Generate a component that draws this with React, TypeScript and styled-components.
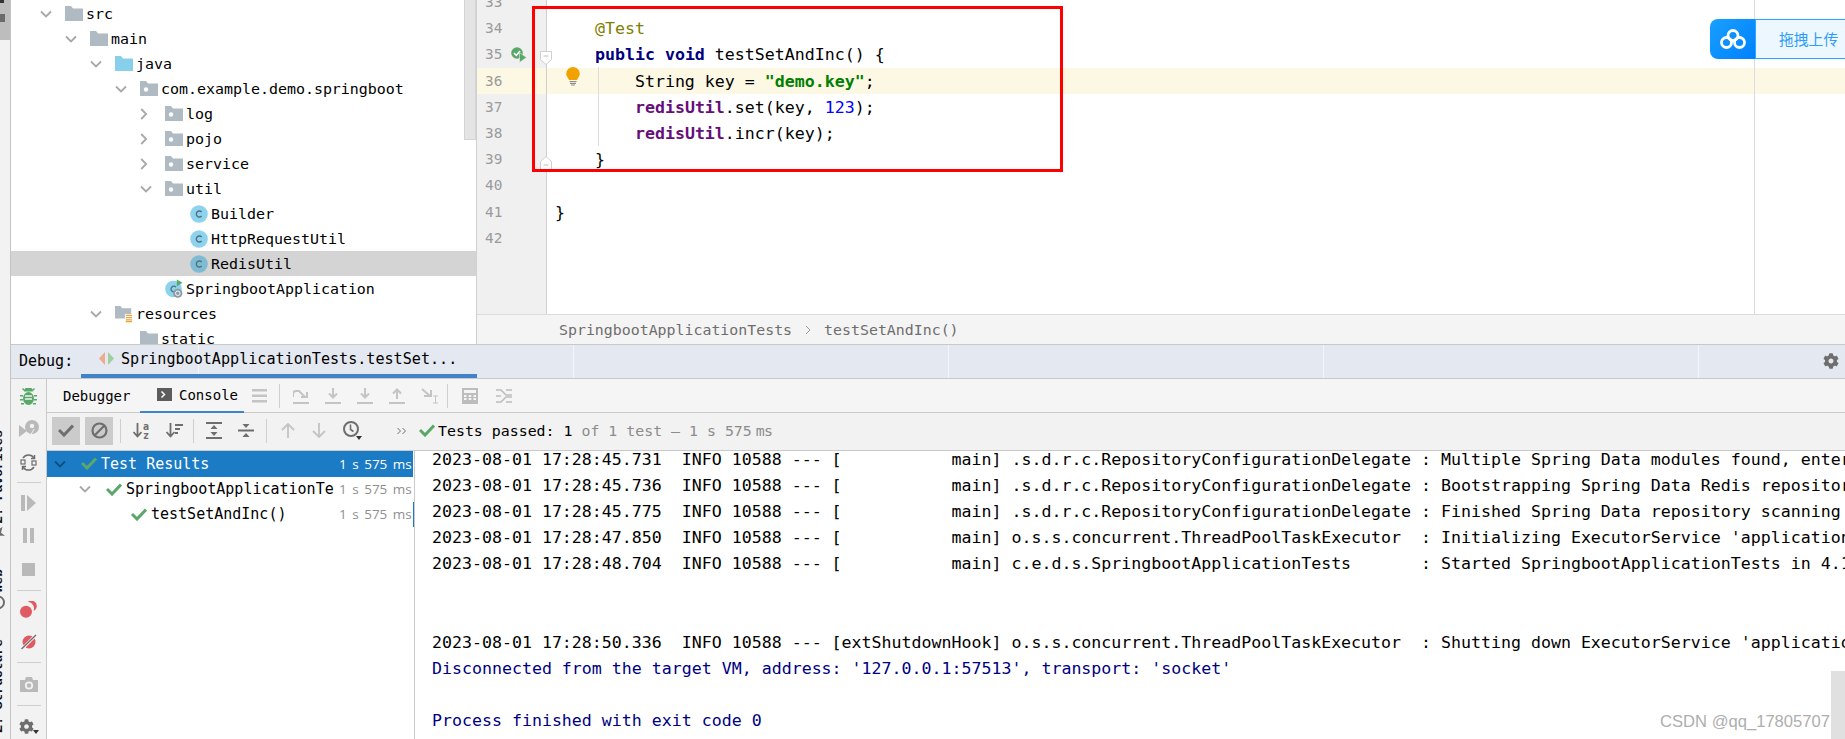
import React from "react";
import styled, { createGlobalStyle } from "styled-components";
import { FaCog } from "react-icons/fa";

const Global = createGlobalStyle`
  html, body { margin: 0; padding: 0; background: #fff; }
  body { font-family: "DejaVu Sans Mono", "Liberation Mono", monospace; }
`;

const MONO = `"DejaVu Sans Mono", "Liberation Mono", monospace`;

const Page = styled.div`
  position: relative; width: 1845px; height: 739px; overflow: hidden; display: flex; background: #fff; color: #000;
  font-family: ${MONO};
`;
const SideStrip = styled.div`
  width: 10px; flex: none; background: #f2f2f2; border-right: 1px solid #c4c4c4; display: flex; flex-direction: column; overflow: hidden;
`;
const SideActive = styled.div`
  height: 40px; flex: none; background: #bdbdbd; display: flex; flex-direction: column; align-items: flex-start; gap: 11px;
`;
const SideMarkTop = styled.div` width: 4px; height: 3px; background: #333; `;
const SideMark = styled.div` width: 5px; height: 8px; background: #6b6b6b; `;
const SideLabel = styled.div<{ $top: number }>`
  margin-top: ${p => p.$top}px; margin-left: -9px; width: 15px; flex: none; display: flex; align-items: center; gap: 3px;
  writing-mode: vertical-rl; transform: rotate(180deg); font-size: 13px; line-height: 15px; white-space: nowrap; font-weight: 700; color: #111;
  font-family: "Liberation Mono", monospace;
`;
const Main = styled.div` flex: 1; min-width: 0; display: flex; flex-direction: column; `;
const Top = styled.div` height: 344px; flex: none; display: flex; border-bottom: 1px solid #c9c9c9; box-sizing: content-box; `;

/* project tree */
const Tree = styled.div`
  position: relative; width: 465px; flex: none; overflow: hidden; border-right: 1px solid #d0d0d0; font-size: 14.95px;
  padding-top: 1px; box-sizing: content-box;
`;
const TreeRow = styled.div<{ $level: number; $selected?: boolean }>`
  height: 25px; display: flex; align-items: center; padding-left: ${p => 29 + p.$level * 25}px; white-space: nowrap;
  background: ${p => (p.$selected ? "#d4d4d4" : "transparent")};
`;
const Chevron = styled.span`
  width: 25px; flex: none; display: flex; align-items: center; height: 100%;
`;
const RowIcon = styled.span` width: 18px; height: 18px; flex: none; margin-right: 3px; display: flex; align-items: center; `;
const TreeScroll = styled.div`
  position: absolute; left: 453px; top: 0; width: 10px; height: 139px; background: #e4e4e4; border: 1px solid #d4d4d4; border-top: none;
`;

/* editor */
const Editor = styled.div` position: relative; flex: 1; min-width: 0; display: flex; flex-direction: column; `;
const EditorBody = styled.div` flex: 1; min-height: 0; overflow: hidden; position: relative; `;
const Lines = styled.div` margin-top: -11px; display: flex; flex-direction: column; height: 345px; `;
const Line = styled.div<{ $hl?: boolean; $fill?: boolean }>`
  display: flex; height: 26.2px; flex: ${p => (p.$fill ? "1" : "none")}; background: ${p => (p.$hl ? "#fdf8e4" : "transparent")};
`;
const GutterCell = styled.div<{ $hl?: boolean }>`
  position: relative; width: 61px; padding-left: 8px; flex: none; line-height: 27px; font-size: 14.4px; color: #9a9a9a; font-family: ${MONO};
  background: ${p => (p.$hl ? "#fdf8e4" : "#f0f0f0")}; border-right: 1px solid #cfcfcf;
`;
const Code = styled.div`
  padding-left: 8px; font-size: 16.6px; line-height: 27px; white-space: pre; color: #000;
`;
const Kw = styled.span` color: #000080; font-weight: 700; `;
const Ann = styled.span` color: #808000; `;
const Str = styled.span` color: #008000; font-weight: 700; `;
const Field = styled.span` color: #660e7a; font-weight: 700; `;
const Num = styled.span` color: #0000ff; `;
const RunMark = styled.span` position: absolute; left: 34px; top: 4px; `;
const FoldMark = styled.span` position: absolute; left: 63px; top: 6px; `;
const Bulb = styled.span` position: absolute; left: 89px; top: 67px; `;
const IndentGuide = styled.div` position: absolute; left: 121px; top: 67px; width: 1px; height: 79px; background: #dcdcdc; `;
const PrintMargin = styled.div` position: absolute; left: 1277px; top: 0; width: 1px; height: 100%; background: #dcdcdc; `;
const Crumbs = styled.div`
  height: 29px; flex: none; display: flex; align-items: center; padding-left: 82px; gap: 13px; font-size: 14.9px; color: #6e6e6e;
  background: #f4f4f4; border-top: 1px solid #dcdcdc;
`;

/* debug header */
const DebugHeader = styled.div`
  position: relative; height: 33px; flex: none; display: flex; border-bottom: 1px solid #c9c9c9; font-size: 15px;
  background: linear-gradient(90deg, #f4f6fa 1px, transparent 1px) 187px 0 / 375px 100% repeat-x, #e4e8f0;
`;
const DebugTitle = styled.div` width: 62px; padding-left: 8px; flex: none; line-height: 33px; `;
const DebugTab = styled.div`
  width: 396px; height: 33px; flex: none; box-sizing: border-box; display: flex; align-items: center; gap: 7px; padding: 0 0 2px 18px; border-bottom: 4px solid #4083c9; white-space: nowrap; font-size: 15.1px;
`;
const HeaderCog = styled.span` position: absolute; right: 6px; top: 8px; color: #6e6e6e; display: flex; `;

/* debug body */
const DebugBody = styled.div` flex: 1; min-height: 0; display: flex; `;
const VBar = styled.div`
  width: 35px; flex: none; background: #f2f2f2; border-right: 1px solid #c9c9c9; display: flex; flex-direction: column; align-items: center; padding-top: 8px; box-sizing: content-box;
`;
const VButton = styled.div<{ $h: number }>` height: ${p => p.$h}px; flex: none; display: flex; align-items: center; justify-content: center; `;
const VSep = styled.div<{ $mt?: number }>` width: 24px; height: 1px; flex: none; background: #cfcfcf; margin-top: ${p => p.$mt ?? 0}px; `;
const DebugMain = styled.div` flex: 1; min-width: 0; display: flex; flex-direction: column; `;
const TabsRow = styled.div`
  height: 34px; flex: none; display: flex; align-items: center; background: #f5f5f5; border-bottom: 1px solid #c9c9c9; box-sizing: border-box; font-size: 14px;
`;
const PlainTab = styled.div` padding-left: 16px; width: 93px; flex: none; box-sizing: border-box; `;
const ConsoleTab = styled.div`
  width: 104px; height: 34px; flex: none; box-sizing: border-box; display: flex; align-items: center; gap: 7px; padding-left: 17px; border-bottom: 2px solid #4083c9; 
`;
const IconGroup = styled.div<{ $pl: number; $gap: number }>` display: flex; align-items: center; padding-left: ${p => p.$pl}px; gap: ${p => p.$gap}px; flex: none; `;
const ToolSep = styled.div<{ $ml: number }>` width: 1px; height: 24px; flex: none; background: #cfcfcf; margin-left: ${p => p.$ml}px; `;
const ActionsRow = styled.div`
  height: 38px; flex: none; display: flex; align-items: center; background: #f2f2f2; border-bottom: 1px solid #c9c9c9; box-sizing: border-box; padding: 0 0 2px 5px; font-size: 14.9px; white-space: nowrap;
`;
const Toggle = styled.div<{ $ml?: number }>`
  width: 28px; height: 28px; flex: none; background: #cbcbcb; display: flex; align-items: center; justify-content: center; margin-left: ${p => p.$ml ?? 0}px;
`;
const Passed = styled.span` margin-left: 3px; `;
const Muted = styled.span` color: #8c8c8c; `;
const Ms = styled.span` margin-left: 4px; letter-spacing: -0.7px; `;
const Results = styled.div` flex: 1; min-height: 0; display: flex; `;
const TestTree = styled.div` position: relative; width: 367px; flex: none; font-size: 15px; border-right: 1px solid #c9c9c9; box-sizing: content-box; `;
const TestRow = styled.div<{ $sel?: boolean; $level: number }>`
  height: 25px; display: flex; align-items: center; white-space: nowrap; padding-left: ${p => 7 + p.$level * 25}px; padding-right: 6px; margin-right: 1px; padding-bottom: 1px; box-sizing: border-box;
  background: ${p => (p.$sel ? "#1b7bc4" : "transparent")}; color: ${p => (p.$sel ? "#fff" : "#000")};
  &:first-child { height: 26px; }
`;
const TestChevron = styled.span` width: 27px; flex: none; display: flex; `;
const TestCheck = styled.span` width: 19px; flex: none; display: flex; margin-right: 1px; `;
const TestName = styled.span` flex: 1; min-width: 0; overflow: hidden; `;
const Time = styled.span<{ $sel?: boolean }>` flex: none; width: 68px; margin-left: 4px; text-align: right; color: ${p => (p.$sel ? "#fff" : "#8f8f8f")}; font-family: "Open Sans", sans-serif; font-size: 13.5px; word-spacing: 2px; `;
const Mark = styled.div` position: absolute; right: 0; top: 51px; width: 1px; height: 25px; background: #1b7bc4; `;
const Console = styled.div`
  position: relative; flex: 1; min-width: 0; overflow: hidden; padding-left: 17px; margin-top: -4.5px; font-size: 16.6px; line-height: 26.2px; white-space: pre;
`;
const ConsoleLine = styled.div<{ $sys?: boolean }>` height: 26.2px; color: ${p => (p.$sys ? "#000080" : "#000")}; `;
const ConsoleScroll = styled.div` position: absolute; right: 0; top: 224px; width: 14px; height: 100px; background: #e0e0e0; `;

/* overlays */
const RedBox = styled.div` position: absolute; left: 532px; top: 6px; width: 531px; height: 166px; box-sizing: border-box; border: 3px solid #f00; pointer-events: none; `;
const Baidu = styled.div` position: absolute; left: 1710px; top: 19px; width: 135px; height: 40px; display: flex; `;
const BaiduIcon = styled.div` width: 45px; flex: none; background: linear-gradient(135deg, #18a0ff, #0080ff); border-radius: 8px 0 0 8px; display: flex; align-items: center; justify-content: center; `;
const BaiduText = styled.div`
  flex: 1; background: #ecf7ff; border: 1px solid #2aa7ff; border-right: none; color: #2d9dfb; font-size: 14.8px; padding-left: 23px; line-height: 38px; white-space: nowrap; overflow: hidden;
  font-family: "Noto Sans CJK SC", sans-serif;
`;
const Watermark = styled.div` position: absolute; left: 1660px; top: 712px; font-family: "Liberation Sans", sans-serif; font-size: 16.6px; line-height: 20px; color: #aeaeae; white-space: nowrap; `;

/* icons */
const G = "#b9b9b9";
const D = "#6e6e6e";
const Down = ({ c = "#a8a8a8" }: { c?: string }) => (
  <svg width="12" height="8" viewBox="0 0 12 8"><path d="M1 1.5l5 5 5-5" fill="none" stroke={c} strokeWidth="1.8" /></svg>
);
const Right = () => (
  <svg width="8" height="12" viewBox="0 0 8 12"><path d="M1.2 1l5 5-5 5" fill="none" stroke="#a8a8a8" strokeWidth="1.8" /></svg>
);
const Folder = ({ c = "#afbac3", dot }: { c?: string; dot?: boolean }) => (
  <svg width="18" height="15" viewBox="0 0 18 15">
    <path d="M0 0h6l2 2.5h10V15H0z" fill={c} />
    {dot && <circle cx="6" cy="8.5" r="2.2" fill="#fff" />}
  </svg>
);
const ResFolder = () => (
  <svg width="20" height="18" viewBox="0 0 20 18">
    <path d="M0 0h6l2 2.5h10V14H0z" fill="#afbac3" />
    <rect x="11" y="9" width="9" height="9" fill="#fff" />
    <path d="M12 10.5h7M12 13h7M12 15.5h7M12 17.5h7" stroke="#e8a33d" strokeWidth="1.3" />
  </svg>
);
const ClassIcon = ({ dark }: { dark?: boolean }) => (
  <svg width="18" height="18" viewBox="0 0 18 18">
    <circle cx="9" cy="9" r="8.8" fill={dark ? "#7fbcd4" : "#8dd3ee"} />
    <path d="M11.6 7a3 3 0 1 0 0 4" fill="none" stroke="#51707e" strokeWidth="1.4" />
  </svg>
);
const BootClass = () => (
  <svg width="19" height="20" viewBox="0 0 19 20">
    <circle cx="9" cy="10" r="8.8" fill="#8dd3ee" />
    <path d="M11.6 8a3 3 0 1 0 0 4" fill="none" stroke="#51707e" strokeWidth="1.4" />
    <path d="M12.5 0l6 3.5-6 3.5z" fill="#59a869" />
    <circle cx="13.5" cy="14.5" r="4.8" fill="#8b9aa3" />
    <circle cx="13.5" cy="14.5" r="2.4" fill="none" stroke="#fff" strokeWidth="1" />
  </svg>
);
const RunTest = () => (
  <svg width="16" height="16" viewBox="0 0 16 16">
    <circle cx="6" cy="6" r="5.8" fill="#59a869" />
    <path d="M3 6l2.300 2.400L9 4" fill="none" stroke="#fff" strokeWidth="1.600" />
    <path d="M8.500 5.500l7 5-7 5z" fill="#59a869" stroke="#f0f0f0" strokeWidth=".6" />
  </svg>
);
const FoldOpen = () => (
  <svg width="12" height="14" viewBox="0 0 12 14"><path d="M.5.5h11v8L6 13.500.5 8.500z" fill="#fff" stroke="#cfcfcf" /><path d="M3.500 5h5" stroke="#c0c0c0" /></svg>
);
const FoldClose = () => (
  <svg width="12" height="14" viewBox="0 0 12 14"><path d="M.5 13.500h11v-8L6 .5.5 5.500z" fill="#fff" stroke="#cfcfcf" /><path d="M3.500 9h5" stroke="#c0c0c0" /></svg>
);
const BulbIcon = () => (
  <svg width="14" height="19" viewBox="0 0 14 19">
    <path d="M7 0a6.800 6.800 0 0 1 6.800 6.800c0 2.700-2 4-2.800 6.200H3C2.200 10.800.2 9.500.2 6.800A6.800 6.800 0 0 1 7 0z" fill="#f2a200" />
    <path d="M3.500 14.500h7M4 16.300h6M5 18h4" stroke="#8f8f8f" strokeWidth="1.200" />
  </svg>
);
const TabDiamond = () => (
  <svg width="15" height="13" viewBox="0 0 15 13"><path d="M6 0v13L0 6.500z" fill="#eea98e" /><path d="M9 0v13l6-6.500z" fill="#9fcf9f" /></svg>
);
const Bug = () => (
  <svg width="17" height="18" viewBox="0 0 17 18" fill="#59a869">
    <ellipse cx="8.500" cy="10.500" rx="5.500" ry="6.500" />
    <path d="M4 3.500a4.500 4.500 0 0 1 9 0z" />
    <path d="M0 7h3v1.500H0zM14 7h3v1.500h-3zM0 11h3v1.500H0zM14 11h3v1.500h-3zM1 15h3v1.500H1zM13 15h3v1.500h-3zM3 0l2 2-1 1-2-2zM14 0l-2 2 1 1 2-2z" />
    <path d="M5 8h7M5 11h7" stroke="#f2f2f2" strokeWidth="1.500" />
  </svg>
);
const RerunFailed = () => (
  <svg width="20" height="18" viewBox="0 0 20 18">
    <path d="M0 5l8 6-8 6z" fill={G} />
    <circle cx="13" cy="7" r="7" fill={G} />
    <circle cx="13" cy="6" r="2.200" fill="#f2f2f2" />
    <path d="M15.200 9l-3 5" stroke="#f2f2f2" strokeWidth="1" />
  </svg>
);
const Rerun = () => (
  <svg width="17" height="19" viewBox="0 0 17 19" fill="none" stroke={D} strokeWidth="1.500">
    <path d="M3 5a6.500 6.500 0 0 1 11 0M14 14a6.500 6.500 0 0 1-11 0" />
    <path d="M11 5.500h3.500V2M6 13.500H2.500V17" />
    <rect x="1" y="7" width="4" height="4" strokeWidth="1.200" />
    <rect x="12" y="8" width="4" height="4" strokeWidth="1.200" />
  </svg>
);
const Resume = () => (
  <svg width="15" height="16" viewBox="0 0 15 16" fill={G}><rect width="4" height="16" /><path d="M6 0l9 8-9 8z" /></svg>
);
const Pause = () => (
  <svg width="11" height="15" viewBox="0 0 11 15" fill={G}><rect width="4" height="15" /><rect x="7" width="4" height="15" /></svg>
);
const Stop = () => (
  <svg width="13" height="13" viewBox="0 0 13 13"><rect width="13" height="13" fill={G} /></svg>
);
const Breakpoints = () => (
  <svg width="17" height="17" viewBox="0 0 17 17" fill="#e05a64">
    <path d="M8 .7a5.500 5.500 0 0 1 8.800 5 5.500 5.500 0 0 1-3.300 4.500A7 7 0 0 0 8 .7z" />
    <circle cx="6" cy="10.800" r="6" />
  </svg>
);
const Mute = () => (
  <svg width="16" height="16" viewBox="0 0 16 16">
    <circle cx="8" cy="8" r="6.500" fill="#e05a64" />
    <path d="M1 15L15 1" stroke="#f2f2f2" strokeWidth="3" />
    <path d="M.5 15L15 1" stroke="#6e6e6e" strokeWidth="1.300" />
  </svg>
);
const Camera = () => (
  <svg width="18" height="15" viewBox="0 0 18 15">
    <path d="M0 3h5l1-3h6l1 3h5v12H0z" fill={G} />
    <circle cx="9" cy="8.500" r="3.200" fill="none" stroke="#f2f2f2" strokeWidth="1.800" />
  </svg>
);
const GearMenu = () => (
  <span style={{ display: "flex", alignItems: "flex-end", color: D }}>
    <FaCog size={15} />
    <svg width="6" height="4" viewBox="0 0 6 4" style={{ marginLeft: -1 }}><path d="M0 0h6L3 4z" fill="#333" /></svg>
  </span>
);
const ConsoleGlyph = () => (
  <svg width="15" height="13" viewBox="0 0 15 13"><rect width="15" height="13" fill="#5c5c5c" /><path d="M4.500 3.500l3 3-3 3" fill="none" stroke="#fff" strokeWidth="1.500" /></svg>
);
const Menu = () => (
  <svg width="15" height="14" viewBox="0 0 15 14" fill={"#c4c4c4"}><rect width="15" height="2.500" /><rect y="5.500" width="15" height="2.500" /><rect y="11" width="15" height="2.500" /></svg>
);
const DownBar = () => (
  <svg width="16" height="16" viewBox="0 0 16 16" fill="none" stroke="#c4c4c4" strokeWidth="2"><path d="M8 0v9M4 5.500l4 4 4-4M0 15h16" /></svg>
);
const UpBar = () => (
  <svg width="16" height="16" viewBox="0 0 16 16" fill="none" stroke="#c4c4c4" strokeWidth="2"><path d="M8 11V2M4 5.500l4-4 4 4M0 15h16" /></svg>
);
const StepOver = () => (
  <svg width="16" height="16" viewBox="0 0 16 16" fill="none" stroke="#c4c4c4" strokeWidth="2"><path d="M0 9V6q0-3 3-3h3l6 6M8 9h6V4M0 15h16" /></svg>
);
const Trace = () => (
  <svg width="18" height="16" viewBox="0 0 18 16" fill="none" stroke="#c4c4c4" strokeWidth="2"><path d="M1 1l8 7M3 8h7V2" /><path d="M12 8h5M14.500 8v7M12 15h5" strokeWidth="1" /></svg>
);
const Calc = () => (
  <svg width="16" height="16" viewBox="0 0 16 16"><rect width="16" height="16" fill="#bdbdbd" /><rect x="2" y="2" width="12" height="3" fill="#f5f5f5" /><path d="M2 8h2.500M6.700 8h2.600M11.500 8h2.500M2 11h2.500M6.700 11h2.600M11.500 11h2.500" stroke="#f5f5f5" strokeWidth="2" /></svg>
);
const Streams = () => (
  <svg width="16" height="14" viewBox="0 0 16 14" fill="none" stroke="#bdbdbd" strokeWidth="1.600"><path d="M0 1h5l5 5h6M0 7h5M0 13h5l5-5h6M10 1h6M10 13h6" /></svg>
);
const Check = ({ c = "#6e6e6e" }: { c?: string }) => (
  <svg width="16" height="13" viewBox="0 0 16 13"><path d="M1 6l5 5 9-9.500" fill="none" stroke={c} strokeWidth="3" /></svg>
);
const NoEntry = () => (
  <svg width="17" height="17" viewBox="0 0 17 17" fill="none" stroke="#6e6e6e" strokeWidth="2.200"><circle cx="8.500" cy="8.500" r="7" /><path d="M3.500 13.500l10-10" /></svg>
);
const SortAz = () => (
  <span style={{ display: "flex", alignItems: "center" }}>
    <svg width="9" height="15" viewBox="0 0 9 15" fill="none" stroke="#6e6e6e" strokeWidth="1.800"><path d="M4.500 0v13M.5 9l4 4.500 4-4.500" /></svg>
    <span style={{ fontSize: 10, lineHeight: "9px", width: 8, marginLeft: 1, color: "#6e6e6e", fontWeight: 700 }}>a<br />z</span>
  </span>
);
const SortDur = () => (
  <svg width="17" height="15" viewBox="0 0 17 15" fill="none" stroke="#6e6e6e" strokeWidth="1.800"><path d="M4.500 0v13M.5 9l4 4.500 4-4.500M9 2h8M9 6h5M9 10h3" /></svg>
);
const Expand = () => (
  <svg width="16" height="17" viewBox="0 0 16 17" fill="#6e6e6e"><rect width="16" height="2" /><rect y="15" width="16" height="2" /><path d="M8 3l3.500 4h-7zM8 14l-3.500-4h7z" /></svg>
);
const Collapse = () => (
  <svg width="16" height="15" viewBox="0 0 16 15" fill="#6e6e6e"><rect y="6.500" width="16" height="2" /><path d="M8 5L4.500 1h7zM8 10l3.500 4h-7z" /></svg>
);
const ArrowUp = () => (
  <svg width="14" height="15" viewBox="0 0 14 15" fill="none" stroke="#c4c4c4" strokeWidth="1.800"><path d="M7 15V1M1 7l6-6 6 6" /></svg>
);
const ArrowDown = () => (
  <svg width="14" height="15" viewBox="0 0 14 15" fill="none" stroke="#c4c4c4" strokeWidth="1.800"><path d="M7 0v14M1 8l6 6 6-6" /></svg>
);
const Clock = () => (
  <svg width="19" height="20" viewBox="0 0 19 20">
    <circle cx="8" cy="8" r="7" fill="none" stroke="#6e6e6e" strokeWidth="2" />
    <path d="M7.500 3.500V8.500l3 2" fill="none" stroke="#6e6e6e" strokeWidth="1.600" />
    <path d="M13 15h6l-3 4z" fill="#333" />
  </svg>
);
const More = () => (
  <svg width="10" height="8" viewBox="0 0 10 8" fill="none" stroke="#6e6e6e"><path d="M.5 1l3 3-3 3M5.500 1l3 3-3 3" /></svg>
);
const BaiduCloud = () => (
  <svg width="26" height="20" viewBox="0 0 26 20" fill="none" stroke="#fff" strokeWidth="2.800">
    <circle cx="13" cy="6.500" r="5" />
    <circle cx="6.500" cy="13.500" r="5" />
    <circle cx="19.500" cy="13.500" r="5" />
  </svg>
);
const StarGlyph = () => (
  <svg width="14" height="14" viewBox="0 0 14 14"><path d="M7 0l2 5h5l-4 3 1.500 6L7 10.500 2.500 14 4 8 0 5h5z" fill="#6e6e6e" /></svg>
);
const GlobeGlyph = () => (
  <svg width="14" height="14" viewBox="0 0 14 14"><circle cx="7" cy="7" r="6" fill="none" stroke="#6e6e6e" strokeWidth="2" /></svg>
);

const consoleLines: { t: string; sys?: boolean }[] = [
  { t: "2023-08-01 17:28:45.731  INFO 10588 --- [           main] .s.d.r.c.RepositoryConfigurationDelegate : Multiple Spring Data modules found, entering strict repository configuration mode!" },
  { t: "2023-08-01 17:28:45.736  INFO 10588 --- [           main] .s.d.r.c.RepositoryConfigurationDelegate : Bootstrapping Spring Data Redis repositories in DEFAULT mode." },
  { t: "2023-08-01 17:28:45.775  INFO 10588 --- [           main] .s.d.r.c.RepositoryConfigurationDelegate : Finished Spring Data repository scanning in 14ms." },
  { t: "2023-08-01 17:28:47.850  INFO 10588 --- [           main] o.s.s.concurrent.ThreadPoolTaskExecutor  : Initializing ExecutorService 'applicationTaskExecutor'" },
  { t: "2023-08-01 17:28:48.704  INFO 10588 --- [           main] c.e.d.s.SpringbootApplicationTests       : Started SpringbootApplicationTests in 4.152 seconds" },
  { t: " " },
  { t: " " },
  { t: "2023-08-01 17:28:50.336  INFO 10588 --- [extShutdownHook] o.s.s.concurrent.ThreadPoolTaskExecutor  : Shutting down ExecutorService 'applicationTaskExecutor'" },
  { t: "Disconnected from the target VM, address: '127.0.0.1:57513', transport: 'socket'", sys: true },
  { t: " " },
  { t: "Process finished with exit code 0", sys: true },
];

const treeRows: { level: number; name: string; chev?: "d" | "r"; icon: React.ReactNode; sel?: boolean }[] = [
  { level: 0, name: "src", chev: "d", icon: <Folder /> },
  { level: 1, name: "main", chev: "d", icon: <Folder /> },
  { level: 2, name: "java", chev: "d", icon: <Folder c="#87cfeb" /> },
  { level: 3, name: "com.example.demo.springboot", chev: "d", icon: <Folder dot /> },
  { level: 4, name: "log", chev: "r", icon: <Folder dot /> },
  { level: 4, name: "pojo", chev: "r", icon: <Folder dot /> },
  { level: 4, name: "service", chev: "r", icon: <Folder dot /> },
  { level: 4, name: "util", chev: "d", icon: <Folder dot /> },
  { level: 5, name: "Builder", icon: <ClassIcon /> },
  { level: 5, name: "HttpRequestUtil", icon: <ClassIcon /> },
  { level: 5, name: "RedisUtil", icon: <ClassIcon dark />, sel: true },
  { level: 4, name: "SpringbootApplication", icon: <BootClass /> },
  { level: 2, name: "resources", chev: "d", icon: <ResFolder /> },
  { level: 3, name: "static", icon: <Folder /> },
];

const codeLines: { n: number; code: React.ReactNode; hl?: boolean; run?: boolean; fold?: "open" | "close" }[] = [
  { n: 33, code: "" },
  { n: 34, code: <>    <Ann>@Test</Ann></> },
  { n: 35, code: <>    <Kw>public void</Kw> testSetAndInc() {"{"}</>, run: true, fold: "open" },
  { n: 36, code: <>        String key = <Str>"demo.key"</Str>;</>, hl: true },
  { n: 37, code: <>        <Field>redisUtil</Field>.set(key, <Num>123</Num>);</> },
  { n: 38, code: <>        <Field>redisUtil</Field>.incr(key);</> },
  { n: 39, code: <>    {"}"}</>, fold: "close" },
  { n: 40, code: "" },
  { n: 41, code: "}" },
  { n: 42, code: "" },
];

export default function App() {
  return (
    <Page>
      <Global />
      <SideStrip>
        <SideActive><SideMarkTop /><SideMark /></SideActive>
        <SideLabel $top={390}><StarGlyph />2: Favorites</SideLabel>
        <SideLabel $top={28}><GlobeGlyph />Web</SideLabel>
        <SideLabel $top={30}>Z: Structure</SideLabel>
      </SideStrip>
      <Main>
        <Top>
          <Tree>
            {treeRows.map(r => (
              <TreeRow key={r.name} $level={r.level} $selected={r.sel}>
                <Chevron>{r.chev === "d" ? <Down /> : r.chev === "r" ? <Right /> : null}</Chevron>
                <RowIcon>{r.icon}</RowIcon>
                {r.name}
              </TreeRow>
            ))}
            <TreeScroll />
          </Tree>
          <Editor>
            <EditorBody>
              <Lines>
                {codeLines.map(l => (
                  <Line key={l.n} $hl={l.hl}>
                    <GutterCell $hl={l.hl}>
                      {l.n}
                      {l.run && <RunMark><RunTest /></RunMark>}
                      {l.fold && <FoldMark>{l.fold === "open" ? <FoldOpen /> : <FoldClose />}</FoldMark>}
                    </GutterCell>
                    <Code>{l.code}</Code>
                  </Line>
                ))}
                <Line $fill><GutterCell /></Line>
              </Lines>
              <Bulb><BulbIcon /></Bulb>
              <IndentGuide />
              <PrintMargin />
            </EditorBody>
            <Crumbs>
              <span>SpringbootApplicationTests</span>
              <svg width="6" height="10" viewBox="0 0 6 10"><path d="M1 1l4 4-4 4" fill="none" stroke="#9a9a9a" /></svg>
              <span>testSetAndInc()</span>
            </Crumbs>
          </Editor>
        </Top>
        <DebugHeader>
          <DebugTitle>Debug:</DebugTitle>
          <DebugTab><TabDiamond />SpringbootApplicationTests.testSet...</DebugTab>
          <HeaderCog><FaCog size={16} /></HeaderCog>
        </DebugHeader>
        <DebugBody>
          <VBar>
            <VButton $h={20}><Bug /></VButton>
            <VButton $h={44}><RerunFailed /></VButton>
            <VButton $h={22}><Rerun /></VButton>
            <VSep $mt={9} />
            <VButton $h={39}><Resume /></VButton>
            <VButton $h={26}><Pause /></VButton>
            <VButton $h={42}><Stop /></VButton>
            <VSep />
            <VButton $h={36}><Breakpoints /></VButton>
            <VButton $h={30}><Mute /></VButton>
            <VSep $mt={5} />
            <VButton $h={42}><Camera /></VButton>
            <VSep />
            <VButton $h={40}><GearMenu /></VButton>
          </VBar>
          <DebugMain>
            <TabsRow>
              <PlainTab>Debugger</PlainTab>
              <ConsoleTab><ConsoleGlyph />Console</ConsoleTab>
              <IconGroup $pl={8} $gap={0}><Menu /></IconGroup>
              <ToolSep $ml={12} />
              <IconGroup $pl={13} $gap={16}><StepOver /><DownBar /><DownBar /><UpBar /><Trace /></IconGroup>
              <ToolSep $ml={8} />
              <IconGroup $pl={14} $gap={18}><Calc /><Streams /></IconGroup>
            </TabsRow>
            <ActionsRow>
              <Toggle><Check /></Toggle>
              <Toggle $ml={5}><NoEntry /></Toggle>
              <ToolSep $ml={7} />
              <IconGroup $pl={12} $gap={15}><SortAz /><SortDur /></IconGroup>
              <ToolSep $ml={10} />
              <IconGroup $pl={12} $gap={16}><Expand /><Collapse /></IconGroup>
              <ToolSep $ml={12} />
              <IconGroup $pl={14} $gap={17}><ArrowUp /><ArrowDown /></IconGroup>
              <IconGroup $pl={17} $gap={0}><Clock /></IconGroup>
              <IconGroup $pl={35} $gap={0}><More /></IconGroup>
              <IconGroup $pl={12} $gap={0}><Check c="#59a869" /></IconGroup>
              <Passed>Tests passed: 1 <Muted>of 1 test – 1 s 575<Ms>ms</Ms></Muted></Passed>
            </ActionsRow>
            <Results>
              <TestTree>
                <TestRow $sel $level={0}>
                  <TestChevron><Down c="#0d4f80" /></TestChevron>
                  <TestCheck><Check c="#59a869" /></TestCheck>
                  <TestName>Test Results</TestName>
                  <Time $sel>1 s 575 ms</Time>
                </TestRow>
                <TestRow $level={1}>
                  <TestChevron><Down /></TestChevron>
                  <TestCheck><Check c="#59a869" /></TestCheck>
                  <TestName>SpringbootApplicationTests</TestName>
                  <Time>1 s 575 ms</Time>
                </TestRow>
                <TestRow $level={2}>
                  <TestChevron />
                  <TestCheck><Check c="#59a869" /></TestCheck>
                  <TestName>testSetAndInc()</TestName>
                  <Time>1 s 575 ms</Time>
                </TestRow>
                <Mark />
              </TestTree>
              <Console>
                {consoleLines.map((l, i) => (
                  <ConsoleLine key={i} $sys={l.sys}>{l.t}</ConsoleLine>
                ))}
                <ConsoleScroll />
              </Console>
            </Results>
          </DebugMain>
        </DebugBody>
      </Main>
      <RedBox />
      <Baidu>
        <BaiduIcon><BaiduCloud /></BaiduIcon>
        <BaiduText>拖拽上传</BaiduText>
      </Baidu>
      <Watermark>CSDN @qq_17805707</Watermark>
    </Page>
  );
}
